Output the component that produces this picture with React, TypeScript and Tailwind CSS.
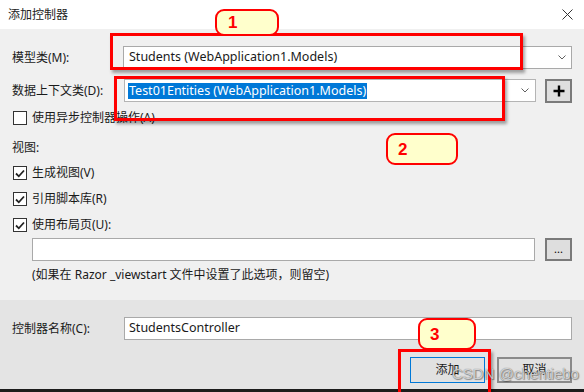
import React from 'react';

const ui = { fontFamily: '"Segoe UI", "Noto Sans", "Noto Sans CJK SC", sans-serif' };

function Chevron() {
  return (
    <svg width="8" height="5" viewBox="0 0 8 5" className="shrink-0">
      <path d="M0.5 0.5 L4 4 L7.5 0.5" fill="none" stroke="#606060" strokeWidth="1" />
    </svg>
  );
}

function Check({ checked }: { checked: boolean }) {
  return (
    <div className="w-[14px] h-[14px] border border-[#333] bg-white flex items-center justify-center shrink-0">
      {checked && (
        <svg width="10" height="9" viewBox="0 0 10 9">
          <path d="M1 4.5 L3.8 7.3 L9 1.5" fill="none" stroke="#222" strokeWidth="1.8" />
        </svg>
      )}
    </div>
  );
}

function CheckRow({ label, checked, className }: { label: string; checked: boolean; className: string }) {
  return (
    <div className={`flex items-center h-[16px] pl-[1px] ${className}`}>
      <Check checked={checked} />
      <span className="ml-[5px] text-[12px] text-[#1a1a1a] leading-none">{label}</span>
    </div>
  );
}

function Callout({ n, className }: { n: string; className: string }) {
  return (
    <div className={`absolute border-2 border-[#ff0000] bg-[#ffffcc] rounded-[9px] flex items-center ${className}`}>
      <span className="text-[#ff0000] text-[17px] font-semibold leading-none" style={{ fontFamily: '"Liberation Sans", sans-serif' }}>{n}</span>
    </div>
  );
}

export default function App() {
  return (
    <div className="w-[584px] h-[392px] relative overflow-hidden bg-[#f0f0f0] text-[12px] text-[#1a1a1a]" style={ui}>
      {/* title bar */}
      <div className="h-[29px] bg-white flex items-center justify-between pl-[8px] pr-[11px]">
        <span className="text-[12px] text-[#222]">添加控制器</span>
        <svg width="11" height="11" viewBox="0 0 11 11">
          <path d="M0.5 0.5 L10.5 10.5 M10.5 0.5 L0.5 10.5" stroke="#333" strokeWidth="1" />
        </svg>
      </div>

      {/* main */}
      <div className="h-[271px] pl-[12px] pr-[12px] pt-[17px] flex flex-col">
        <div className="flex items-center h-[23px]">
          <span className="w-[111px] shrink-0">模型类(M):</span>
          <div className="flex-1 h-[23px] bg-white border border-[#a9a9a9] flex items-center justify-between pl-[5px] pr-[5px]">
            <span className="text-[12.5px]">Students (WebApplication1.Models)</span>
            <Chevron />
          </div>
        </div>

        <div className="flex items-center h-[23px] mt-[10px]">
          <span className="w-[112px] shrink-0">数据上下文类(D):</span>
          <div className="w-[412px] h-[23px] bg-white border border-[#b4b4b4] flex items-center justify-between pl-[3px] pr-[6px]">
            <span className="bg-[#0078d7] text-white text-[12.5px] px-[1px] leading-[16px]">Test01Entities (WebApplication1.Models)</span>
            <Chevron />
          </div>
          <div className="ml-auto w-[27px] h-[24px] bg-[#dedede] border-2 border-[#7a7a7a] flex items-center justify-center">
            <svg width="12" height="12" viewBox="0 0 12 12">
              <path d="M6 0.5 V11.5 M0.5 6 H11.5" stroke="#000" strokeWidth="2.4" />
            </svg>
          </div>
        </div>

        <CheckRow label="使用异步控制器操作(A)" checked={false} className="mt-[8px]" />

        <div className="h-[16px] mt-[14px] flex items-center">视图:</div>

        <CheckRow label="生成视图(V)" checked className="mt-[9px]" />
        <CheckRow label="引用脚本库(R)" checked className="mt-[10px]" />
        <CheckRow label="使用布局页(U):" checked className="mt-[10px]" />

        <div className="flex items-center mt-[5px] pl-[20px]">
          <div className="w-[503px] h-[23px] bg-white border border-[#a9a9a9]" />
          <div className="ml-auto w-[27px] h-[23px] bg-[#dedede] border-2 border-[#7a7a7a] flex items-end justify-center pb-[5px]">
            <span className="text-[11px] leading-none text-black">...</span>
          </div>
        </div>

        <div className="h-[16px] mt-[6px] pl-[20px] flex items-center">(如果在 Razor _viewstart 文件中设置了此选项，则留空)</div>
      </div>

      {/* bottom */}
      <div className="h-[89px] bg-[#e4e4e4] pl-[12px] pr-[12px] pt-[17px] flex flex-col">
        <div className="flex items-center h-[23px]">
          <span className="w-[112px] shrink-0">控制器名称(C):</span>
          <div className="flex-1 h-[23px] bg-white border border-[#a9a9a9] flex items-center pl-[4px] text-[12.5px]">StudentsController</div>
        </div>
        <div className="flex justify-end gap-[12px] mt-[17px]">
          <div className="w-[75px] h-[26px] bg-[#e1e1e1] border border-[#0078d7] flex items-center justify-center">添加</div>
          <div className="w-[75px] h-[26px] bg-[#e1e1e1] border-2 border-[#8a8a8a] flex items-center justify-center">取消</div>
        </div>
      </div>
      <div className="h-[3px] bg-[#1c1c1c]" />

      {/* annotations */}
      <div className="absolute left-[110px] top-[33px] w-[413px] h-[37px] border-[3px] border-[#ff0000] shadow-[2px_3px_3px_rgba(0,0,0,0.35)]" />
      <div className="absolute left-[114px] top-[76px] w-[391px] h-[45px] border-[3px] border-[#ff0000] shadow-[2px_3px_3px_rgba(0,0,0,0.35)]" />
      <div className="absolute left-[398px] top-[349px] w-[93px] h-[50px] border-[3px] border-[#ff0000] shadow-[2px_3px_3px_rgba(0,0,0,0.35)]" />
      <Callout n="1" className="left-[215px] top-[9px] w-[64px] h-[27px] pl-[11px]" />
      <Callout n="2" className="left-[386px] top-[133px] w-[72px] h-[32px] pl-[10px]" />
      <Callout n="3" className="left-[418px] top-[318px] w-[58px] h-[32px] pl-[10px]" />

      <div
        className="absolute left-[452px] top-[366px] text-[15px] leading-none text-white/70 [text-shadow:0_0_1px_rgba(0,0,0,0.6),1px_1px_1px_rgba(0,0,0,0.35)]"
        style={{ fontFamily: '"Liberation Sans", sans-serif' }}
      >
        CSDN @chentiebo
      </div>
    </div>
  );
}
